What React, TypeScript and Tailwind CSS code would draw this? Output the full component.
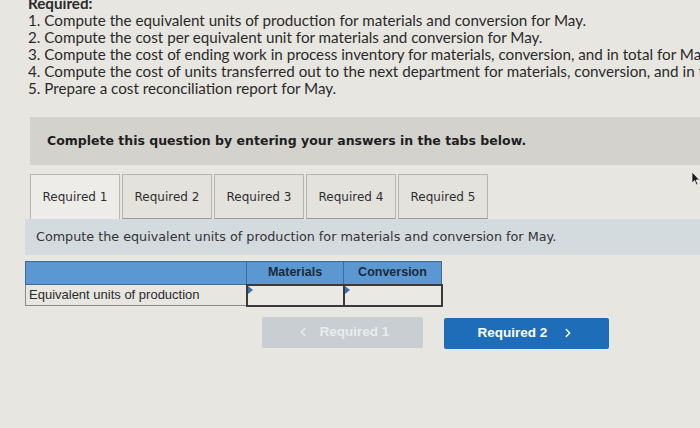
import { ChevronLeft, ChevronRight } from 'lucide-react'

const steps = [
  '1. Compute the equivalent units of production for materials and conversion for May.',
  '2. Compute the cost per equivalent unit for materials and conversion for May.',
  '3. Compute the cost of ending work in process inventory for materials, conversion, and in total for May.',
  '4. Compute the cost of units transferred out to the next department for materials, conversion, and in total for May.',
  '5. Prepare a cost reconciliation report for May.',
]

const tabs = ['Required 1', 'Required 2', 'Required 3', 'Required 4', 'Required 5']

function InputCell() {
  return (
    <td className="relative border-2 border-[#3a3a3a] bg-[#ebe9e4] p-0">
      <span className="absolute left-0 top-0 h-0 w-0 border-y-[4px] border-l-[5px] border-y-transparent border-l-[#3d6fa8]" />
      <div className="h-[19px]" />
    </td>
  )
}

export default function App() {
  return (
    <div className="relative h-[428px] w-[700px] overflow-hidden bg-[#e8e6e1] font-['Liberation_Sans',Arial,sans-serif] text-[#2b2b2b]">
      <div className="-mt-[5px] whitespace-nowrap pl-[28px] font-['Lato',sans-serif] text-[15.2px] leading-[17px] text-[#2a2a2a]">
        <div className="font-bold">Required:</div>
        {steps.map((s) => (
          <div key={s}>{s}</div>
        ))}
      </div>

      <div className="ml-[30px] mt-[20px] flex h-[48px] items-center bg-[#d4d2cc] pl-[17px] font-['DejaVu_Sans',Verdana,sans-serif] text-[12.5px] font-bold text-[#1e1e1e]">
        Complete this question by entering your answers in the tabs below.
      </div>

      <div className="ml-[30px] mt-[9px] flex gap-[2px] font-['DejaVu_Sans',Verdana,sans-serif] text-[12px] text-[#2e2e2e]">
        {tabs.map((t, i) => (
          <div
            key={t}
            className={`flex h-[45px] w-[90px] items-center justify-center border border-[#b7b5af] ${
              i === 0 ? 'border-b-0 bg-[#eeece8]' : 'bg-[#e4e2dd] border-b-[#9e9c97]'
            }`}
          >
            {t}
          </div>
        ))}
      </div>

      <div className="ml-[25px] flex h-[36px] items-center bg-[#d4dbde] pl-[11px] font-['DejaVu_Sans',Verdana,sans-serif] text-[12.75px] text-[#333]">
        Compute the equivalent units of production for materials and conversion for May.
      </div>

      <table className="ml-[25px] mt-[6px] border-collapse text-[13px]">
        <thead>
          <tr className="h-[23px] bg-[#5b97d1] text-[12.5px] font-bold text-[#1c2a3a]">
            <th className="w-[221px] border border-[#3c6c9c]" />
            <th className="w-[97px] border border-[#3c6c9c]">Materials</th>
            <th className="w-[98px] border border-[#3c6c9c]">Conversion</th>
          </tr>
        </thead>
        <tbody>
          <tr>
            <td className="border border-[#8a8a8a] px-[3px] text-left text-[#2a2a2a]">Equivalent units of production</td>
            <InputCell />
            <InputCell />
          </tr>
        </tbody>
      </table>

      <div className="ml-[262px] mt-[10px] flex gap-[21px] text-[13.5px] font-bold">
        <div className="flex h-[31px] w-[161px] items-center justify-center gap-[10px] rounded-[2px] bg-[#c8ced2] text-[#e8ecee]">
          <ChevronLeft className="h-[14px] w-[14px]" strokeWidth={2.5} />
          Required 1
        </div>
        <div className="mt-[1px] flex h-[31px] w-[165px] items-center justify-center gap-[14px] rounded-[2px] bg-[#1e6db9] text-white">
          Required 2
          <ChevronRight className="h-[14px] w-[14px]" strokeWidth={2.5} />
        </div>
      </div>

      <svg className="absolute left-[691px] top-[171px]" width="10" height="15" viewBox="0 0 10 15">
        <path d="M1 1 L1 12 L3.5 9.5 L5.5 14 L7 13.3 L5 9 L8.5 9 Z" fill="#1a1a1a" stroke="#f4f4f4" strokeWidth="0.7" />
      </svg>
    </div>
  )
}
